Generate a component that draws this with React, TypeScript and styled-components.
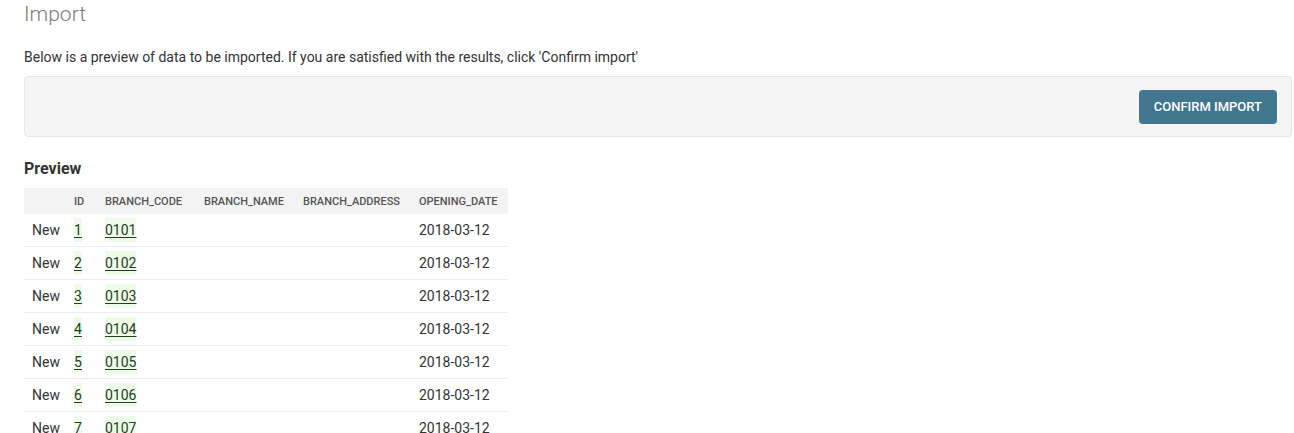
import React from "react";
import styled, { createGlobalStyle } from "styled-components";

const Global = createGlobalStyle`
  html, body { margin: 0; padding: 0; background: #fff; }
  body { font-family: Roboto, "Liberation Sans", Arial, sans-serif; color: #333; }
`;

const Page = styled.div`
  padding: 0 2px 0 24px;
`;

const Title = styled.h1`
  margin: 0;
  padding-top: 1px;
  font-size: 21px;
  font-weight: 300;
  color: #7a7a7a;
  line-height: 26px;
`;

const Intro = styled.p`
  margin: 20px 0 0;
  font-size: 14px;
  line-height: 20px;
  color: #333;
`;

const Panel = styled.div`
  margin-top: 9px;
  height: 61px;
  box-sizing: border-box;
  border: 1px solid #e6e6e6;
  border-radius: 4px;
  background: #f5f5f5;
  display: flex;
  align-items: center;
  justify-content: flex-end;
  padding: 0 14px 0 0;
`;

const Button = styled.button`
  height: 34px;
  padding: 0 15px;
  border: none;
  border-radius: 4px;
  background: #41768f;
  color: #fff;
  font-family: inherit;
  font-size: 13px;
  font-weight: 500;
  text-transform: uppercase;
  cursor: pointer;
`;

const Heading = styled.h2`
  margin: 22px 0 0;
  font-size: 16px;
  font-weight: 700;
  line-height: 20px;
  color: #333;
`;

const Table = styled.table`
  margin-top: 9px;
  border-collapse: collapse;
  table-layout: fixed;
  width: 484px;
  font-size: 14px;
`;

const Th = styled.th<{ $w: number }>`
  width: ${(p) => p.$w}px;
  box-sizing: border-box;
  background: #f3f3f3;
  height: 26px;
  padding: 0 0 0 8px;
  font-size: 11px;
  font-weight: 500;
  text-transform: uppercase;
  color: #555;
  text-align: left;
  white-space: nowrap;
  overflow: hidden;
`;

const Td = styled.td`
  height: 32px;
  padding: 0 0 0 8px;
  border-bottom: 1px solid #ececec;
  color: #333;
  white-space: nowrap;
`;

const Link = styled.a`
  display: inline-block;
  background: #edfbe8;
  padding: 4px 0;
  color: #223f22;
  text-decoration: underline;
  text-underline-offset: 2px;
`;

const columns: [string, number][] = [
  ["", 42],
  ["id", 31],
  ["branch_code", 99],
  ["branch_name", 99],
  ["branch_address", 116],
  ["opening_date", 97],
];

const rows = [1, 2, 3, 4, 5, 6, 7];

export default function App() {
  return (
    <>
      <Global />
      <Page>
        <Title>Import</Title>
        <Intro>
          Below is a preview of data to be imported. If you are satisfied with the results, click 'Confirm import'
        </Intro>
        <Panel>
          <Button>Confirm import</Button>
        </Panel>
        <Heading>Preview</Heading>
        <Table>
          <thead>
            <tr>
              {columns.map(([label, w]) => (
                <Th key={label || "status"} $w={w}>
                  {label}
                </Th>
              ))}
            </tr>
          </thead>
          <tbody>
            {rows.map((n) => (
              <tr key={n}>
                <Td>New</Td>
                <Td>
                  <Link href="#">{n}</Link>
                </Td>
                <Td>
                  <Link href="#">{`010${n}`}</Link>
                </Td>
                <Td></Td>
                <Td></Td>
                <Td>2018-03-12</Td>
              </tr>
            ))}
          </tbody>
        </Table>
      </Page>
    </>
  );
}
